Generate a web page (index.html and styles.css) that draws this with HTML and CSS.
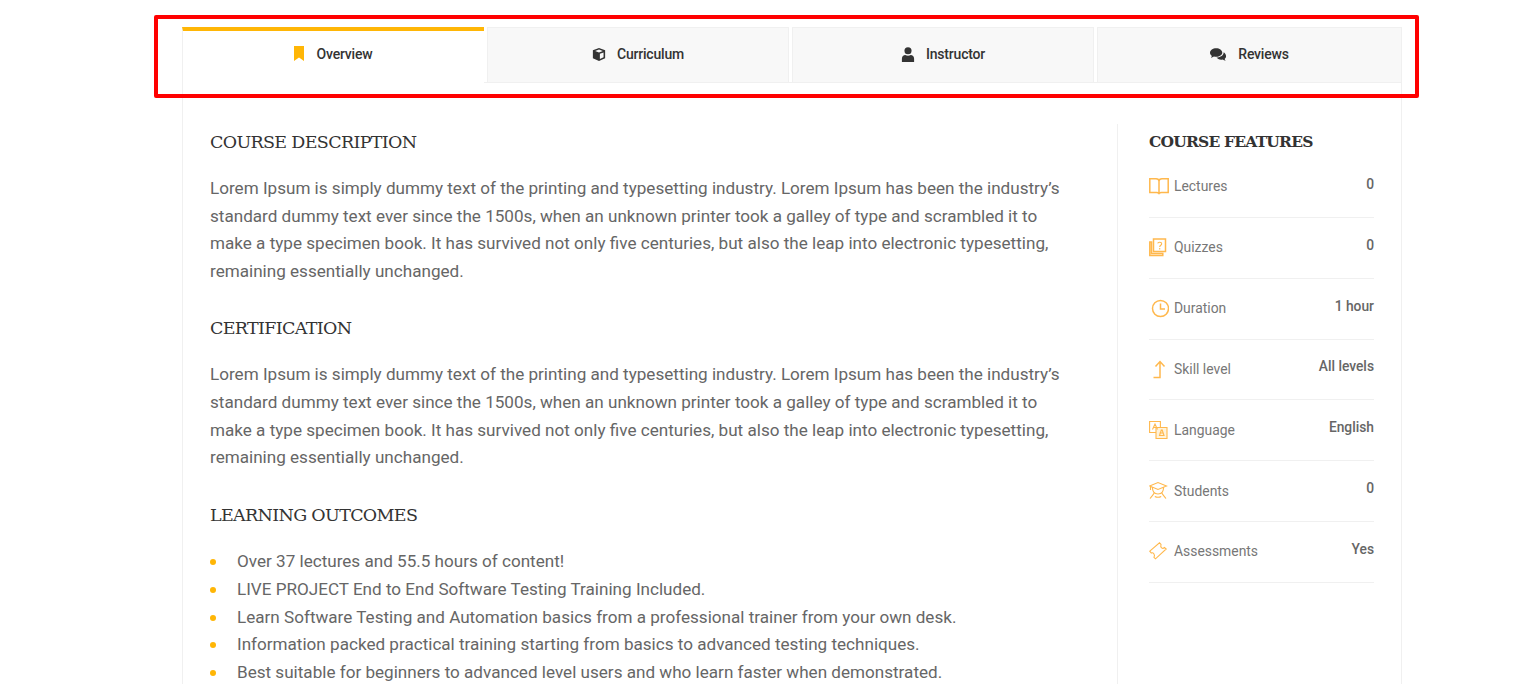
FILE: index.html
```html
<!DOCTYPE html>
<html lang="en">
<head>
    <meta charset="UTF-8">
    <title>Course Overview</title>
    <link rel="stylesheet" href="styles.css">
</head>
<body>
    <div class="page">
        <!-- Tabs -->
        <nav class="tabs">
            <a class="tab active">
                <svg class="tab-icon" viewBox="0 0 12 15"><path d="M1 0h10v15l-5-3.6L1 15z"/></svg>
                Overview
            </a>
            <a class="tab">
                <svg class="tab-icon" viewBox="0 0 16 16"><path d="M8 .5l7 2.600v9.200l-7 3.200-7-3.200V3.100zM8 2.300L3.600 3.900 8 5.600l4.400-1.700zM9 7.200v5.900l4.200-1.900V5.600z"/></svg>
                Curriculum
            </a>
            <a class="tab">
                <svg class="tab-icon" viewBox="0 0 14 16"><circle cx="7" cy="4" r="3.800"/><path d="M.5 16v-3.500C.5 10 2.300 8.600 4 8.600c1 .5 2 .8 3 .8s2-.3 3-.8c1.700 0 3.500 1.400 3.500 3.900V16z"/></svg>
                Instructor
            </a>
            <a class="tab">
                <svg class="tab-icon wide" viewBox="0 0 18 15"><path d="M6.500 1C3 1 0 3 0 5.600c0 1.400.8 2.600 2 3.400-.3.800-.8 1.400-1.300 1.900 1.300-.1 2.600-.6 3.500-1.300.7.200 1.500.3 2.300.3 3.600 0 6.500-2 6.500-4.300S10.100 1 6.500 1z"/><path d="M14.500 5.200c.1 3.100-3.300 5.500-7.600 5.600.9 1.300 2.700 2.200 4.800 2.200.6 0 1.200-.1 1.700-.2.800.6 2 1.100 3.300 1.200-.5-.5-1-1.100-1.200-1.800 1-.7 1.500-1.700 1.500-2.800 0-1.700-1-3.200-2.500-4.200z"/></svg>
                Reviews
            </a>
        </nav>

        <div class="tab-panel">
            <div class="description">
                <h3>COURSE DESCRIPTION</h3>
                <p>Lorem Ipsum is simply dummy text of the printing and typesetting industry. Lorem Ipsum has been the industry’s standard dummy text ever since the 1500s, when an unknown printer took a galley of type and scrambled it to make a type specimen book. It has survived not only five centuries, but also the leap into electronic typesetting, remaining essentially unchanged.</p>

                <h3>CERTIFICATION</h3>
                <p>Lorem Ipsum is simply dummy text of the printing and typesetting industry. Lorem Ipsum has been the industry’s standard dummy text ever since the 1500s, when an unknown printer took a galley of type and scrambled it to make a type specimen book. It has survived not only five centuries, but also the leap into electronic typesetting, remaining essentially unchanged.</p>

                <h3>LEARNING OUTCOMES</h3>
                <ul class="outcomes">
                    <li>Over 37 lectures and 55.5 hours of content!</li>
                    <li>LIVE PROJECT End to End Software Testing Training Included.</li>
                    <li>Learn Software Testing and Automation basics from a professional trainer from your own desk.</li>
                    <li>Information packed practical training starting from basics to advanced testing techniques.</li>
                    <li>Best suitable for beginners to advanced level users and who learn faster when demonstrated.</li>
                </ul>
            </div>

            <aside class="features">
                <h3>COURSE FEATURES</h3>
                <ul>
                    <li>
                        <svg class="feature-icon" viewBox="0 0 20 20"><path d="M.8 2.700h6.200c1.700 0 3 1 3 2.500 0-1.500 1.300-2.500 3-2.500h6.200v13.800h-6.700c-1.200 0-2 .3-2.500 1-.5-.7-1.300-1-2.500-1H.8zM10 5.200v12.300"/></svg>
                        <span class="label">Lectures</span><span class="value">0</span>
                    </li>
                    <li>
                        <svg class="feature-icon" viewBox="0 0 20 20"><path d="M4.500 2h12v12.500h-12zM2.500 5H.8v13.500h13V16.500H2.500z"/><path class="thin" d="M8.700 6.300c.3-1.500 4-1.500 4 .5 0 1.500-2 1.500-2 3.200M10.700 11v1.500"/></svg>
                        <span class="label">Quizzes</span><span class="value">0</span>
                    </li>
                    <li>
                        <svg class="feature-icon" viewBox="0 0 20 20"><circle cx="11.500" cy="10.500" r="8"/><path d="M11.500 5.500v5.500h4.500"/></svg>
                        <span class="label">Duration</span><span class="value">1 hour</span>
                    </li>
                    <li>
                        <svg class="feature-icon" viewBox="0 0 20 20"><path d="M4.500 18.500h6.500V3M6.500 7.500l4.500-5 4.500 5"/></svg>
                        <span class="label">Skill level</span><span class="value">All levels</span>
                    </li>
                    <li>
                        <svg class="feature-icon" viewBox="0 0 20 20"><path class="thin" d="M.6 1.500h10.800v11H.6z"/><path class="pale" d="M7 7.500h11v11H7z"/><path class="thin" d="M3.500 9.500L6 4l2.500 5.500M4.500 7.500h3M12.500 9.500l-2 6h4.500l-2-6M10.500 13h4"/></svg>
                        <span class="label">Language</span><span class="value">English</span>
                    </li>
                    <li>
                        <svg class="feature-icon" viewBox="0 0 20 20"><path class="thin" d="M.6 5L9 1.500 17.500 5 9 8.500zM3.500 6.500c-.2 3.500 1.500 6.500 5.500 6.500s5.700-3 5.500-6.500M1.500 5.500v3.500M5.500 11.500c-1 2-2.800 4-4.500 6M12.500 11.500c1 2 2.800 4 4.500 6M5.800 15.500c2 1 4.400 1 6.400 0"/></svg>
                        <span class="label">Students</span><span class="value">0</span>
                    </li>
                    <li>
                        <svg class="feature-icon" viewBox="0 0 20 20"><path class="thin" d="M.8 10.200L10.500 1.800l1.500 1.500C11 6.500 13.500 8.500 15.500 6.500L17.200 8 6.500 17.800 5 16.300C6.500 13.500 4 11 2.300 12z"/></svg>
                        <span class="label">Assessments</span><span class="value">Yes</span>
                    </li>
                </ul>
            </aside>
        </div>

        <!-- Annotation frame -->
        <div class="highlight"></div>
    </div>
</body>
</html>
```

FILE: styles.css
```css
* {
    box-sizing: border-box;
}

html, body {
    margin: 0;
    padding: 0;
    background: white;
}

body {
    font-family: Roboto, "Liberation Sans", sans-serif;
    font-size: 17.1px;
    color: #666;
    height: 685px;
    overflow: hidden;
}

.page {
    width: 1220px;
    margin-left: 182px;
    padding-top: 27px;
}

.tabs {
    display: flex;
    gap: 3px;
    height: 56px;
}

.tab {
    flex: none;
    width: 302px;
    display: flex;
    align-items: center;
    justify-content: center;
    gap: 11px;
    padding-bottom: 2px;
    background: #f8f8f8;
    border: 1px solid #f0f0f0;
    color: #333;
    font-size: 14px;
    font-weight: 500;
    letter-spacing: -0.2px;
}

.tab:last-child {
    flex: 1;
}

.tab.active {
    position: relative;
    z-index: 1;
    background: white;
    border: none;
    border-left: 1px solid #f0f0f0;
    border-top: 4px solid #ffb606;
    padding-bottom: 7px;
    padding-right: 3px;
}

.tab-icon {
    width: 14px;
    height: 15px;
    fill: #333;
}

.tab-icon.wide {
    width: 17px;
}

.tab.active .tab-icon {
    fill: #ffb606;
}

.tab-panel {
    display: flex;
    align-items: flex-start;
    height: 602px;
    margin-top: -1px;
    padding-top: 41px;
    border: 1px solid #f0f0f0;
    border-bottom: none;
}

h3 {
    margin: 0;
    font-family: "DejaVu Serif", serif;
    font-size: 17.5px;
    letter-spacing: -0.66px;
    line-height: 36px;
    font-weight: normal;
    color: #333;
}

.description {
    width: 934px;
    padding: 0 47px 0 27px;
    flex-shrink: 0;
}

.description p {
    margin: 15px 0 24.5px;
    line-height: 27.7px;
}

.outcomes {
    list-style: none;
    margin: 15.5px 0 0;
    padding: 0;
}

.outcomes li {
    position: relative;
    padding-left: 27px;
    line-height: 27.7px;
}

.outcomes li::before {
    content: "";
    position: absolute;
    left: 0;
    top: 11px;
    width: 6px;
    height: 6px;
    border-radius: 50%;
    background: #ffb606;
}

.features {
    flex: 1;
    align-self: stretch;
    padding: 0 27px 0 31px;
    border-left: 1px solid #f0f0f0;
}

.features h3 {
    font-weight: bold;
    font-size: 15.5px;
    letter-spacing: -0.8px;
}

.features ul {
    list-style: none;
    margin: -3px 0 0;
    padding: 0;
}

.features li {
    display: flex;
    align-items: center;
    height: 60.85px;
    padding-bottom: 1px;
    border-bottom: 1px solid #f0f0f0;
}

.feature-icon {
    width: 20px;
    height: 20px;
    margin-right: 5px;
    fill: none;
    stroke: #ffb84d;
    stroke-width: 1.5;
}

.feature-icon .thin {
    stroke-width: 1.1;
}

.feature-icon .pale {
    stroke-width: 1.1;
    fill: #fff3dc;
}

.label {
    font-size: 13.9px;
    color: #777;
}

.value {
    margin-left: auto;
    margin-top: -5px;
    font-size: 13.8px;
    font-weight: 500;
    color: #666;
}

.highlight {
    position: absolute;
    left: 154px;
    top: 15px;
    width: 1265px;
    height: 83px;
    border: 4px solid #ff0000;
    border-radius: 2px;
    pointer-events: none;
}
```
